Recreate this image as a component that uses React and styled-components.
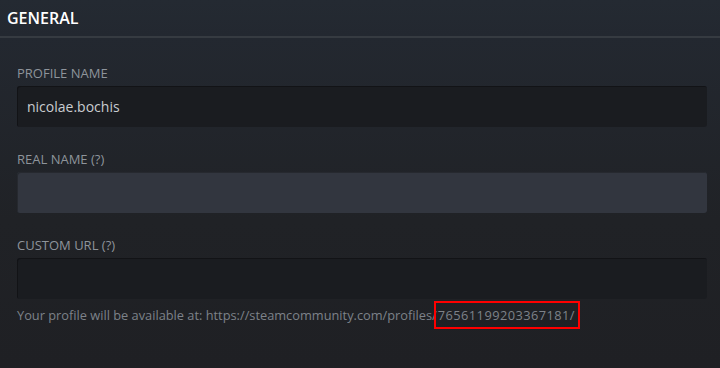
import React from "react";
import styled, { createGlobalStyle } from "styled-components";

const GlobalStyle = createGlobalStyle`
  html, body {
    margin: 0;
    padding: 0;
    background: #1f2024;
  }
  * { box-sizing: border-box; }
`;

const Page = styled.div`
  width: 720px;
  height: 368px;
  overflow: hidden;
  font-family: "Open Sans", "Noto Sans", sans-serif;
  background: linear-gradient(to bottom, #242a32 0%, #232830 10%, #202226 60%, #1f2024 100%);
`;

const Header = styled.div`
  height: 38px;
  padding: 0 7px;
  display: flex;
  align-items: center;
  color: #ffffff;
  font-size: 16px;
  font-weight: 600;
  border-bottom: 2px solid #363b41;
`;

const Body = styled.div`
  padding: 26px 13px 0 17px;
  display: flex;
  flex-direction: column;
`;

const Field = styled.div`
  display: flex;
  flex-direction: column;
  margin-bottom: 23px;
`;

const Label = styled.div`
  color: #8e949b;
  font-size: 13px;
  line-height: 18px;
  margin-bottom: 4px;
  text-transform: uppercase;
`;

const Input = styled.div`
  height: 41px;
  border-radius: 3px;
  padding: 0 10px;
  display: flex;
  align-items: center;
  font-size: 14px;
  color: #c9ccd0;
  background: ${(p) => (p.$light ? "#32363f" : "#1a1c20")};
  box-shadow: inset 1px 1px 0 ${(p) => (p.$light ? "#26292f" : "#121316")};
`;

const Help = styled.div`
  margin-top: -18px;
  color: #7d8289;
  font-size: 12.8px;
  line-height: 22px;
  white-space: nowrap;
`;

const Marked = styled.span`
  outline: 2px solid #ff0000;
  outline-offset: 1px;
  padding: 2px 2px 2px 1px;
  letter-spacing: 0.45px;
`;

export default function App() {
  return (
    <>
      <GlobalStyle />
      <Page>
        <Header>GENERAL</Header>
        <Body>
          <Field>
            <Label>Profile Name</Label>
            <Input>nicolae.bochis</Input>
          </Field>
          <Field>
            <Label>Real Name (?)</Label>
            <Input $light />
          </Field>
          <Field>
            <Label>Custom URL (?)</Label>
            <Input />
          </Field>
          <Help>
            Your profile will be available at: https://steamcommunity.com/profiles/
            <Marked>76561199203367181/</Marked>
          </Help>
        </Body>
      </Page>
    </>
  );
}
